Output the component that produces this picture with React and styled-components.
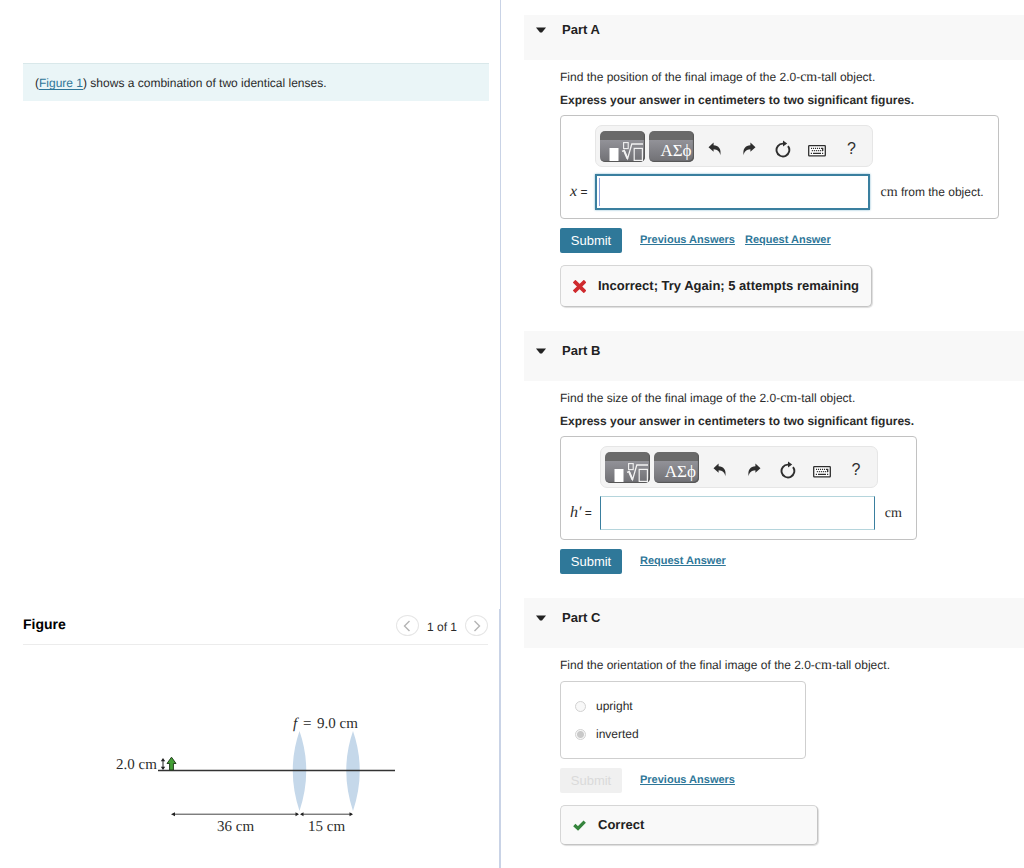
import { useId } from "react"
import styled, { createGlobalStyle } from "styled-components"

const GlobalStyle = createGlobalStyle`
*{
box-sizing: border-box;
}
body{
margin: 0;
background: #fff;
color: #2b2b2b;
font-family: "Liberation Sans", Arial, sans-serif;
font-size: 12px;
line-height: 16px;
text-rendering: geometricPrecision;
}
button, input{
font-family: inherit;
}
`;

function UndoIcon(){
    return (
        <svg width="14" height="14" viewBox="0 0 14 14" aria-hidden="true">
            <path d="M0.5 5.2 5.6 0.6V3.2C10.4 3.4 13.6 6.8 12.3 13.2 11.8 9.6 9.6 7.4 5.6 7.3V9.8Z" fill="#2e2e2e" />
        </svg>
    )
}

function RedoIcon(){
    return (
        <svg width="14" height="14" viewBox="0 0 14 14" aria-hidden="true">
            <path d="M13.5 5.2 8.4 0.6V3.2C3.6 3.4 0.4 6.8 1.7 13.2 2.2 9.6 4.4 7.4 8.4 7.3V9.8Z" fill="#2e2e2e" />
        </svg>
    )
}

function ResetIcon(){
    return (
        <svg width="16" height="18" viewBox="0 0 16 18" aria-hidden="true">
            <path d="M9 3.6H7.8A6.4 6.4 0 1 0 13 6.100" fill="none" stroke="#2e2e2e" strokeWidth="1.900" />
            <path d="M8 0.600 12.200 3.600 8 6.600Z" fill="#2e2e2e" />
        </svg>
    )
}

function KeyboardIcon(){
    return (
        <svg width="18" height="15" viewBox="0 0 18 15" aria-hidden="true">
            <rect x="0.7" y="3.7" width="16.6" height="10.2" rx="0.6" fill="#fff" stroke="#2e2e2e" strokeWidth="1.3" />
            <path d="M3 6.4H15M3.8 8.7H15" stroke="#2e2e2e" strokeWidth="1.3" strokeDasharray="1.1 0.9" />
            <path d="M2.8 11.4H4M5 11.4H13M14 11.4H15.2M14.7 5.8V9" stroke="#2e2e2e" strokeWidth="1.3" />
        </svg>
    )
}

function TemplateIcon(){
    return (
        <svg width="45" height="31" viewBox="0 0 45 31" aria-hidden="true">
            <rect x="9.5" y="17" width="9" height="13" fill="#fff" />
            <rect x="23.6" y="11.6" width="4.6" height="6" fill="none" stroke="#f2f2f2" strokeWidth="1.1" />
            <path d="M22 20.4 24.2 19.4 27.6 27.6 31.8 13H43" fill="none" stroke="#f2f2f2" strokeWidth="1.3" />
            <path d="M24 19.6 27.4 27.6" stroke="#f2f2f2" strokeWidth="1.9" />
            <rect x="34.2" y="17.4" width="8.2" height="12" fill="none" stroke="#f2f2f2" strokeWidth="1.2" />
        </svg>
    )
}

function CrossIcon(){
    return (
        <svg width="13" height="13" viewBox="0 0 13 13" aria-hidden="true">
            <path d="M2.400 2.400 10.800 10.600M10.800 2.400 2.400 10.600" stroke="#cf2a2e" strokeWidth="3.700" strokeLinecap="square" />
        </svg>
    )
}

function CheckIcon(){
    return (
        <svg width="13" height="13" viewBox="0 0 13 13" aria-hidden="true">
            <path d="M1.3 6 5 9.4 11.7 2.6" fill="none" stroke="#35843c" strokeWidth="3.3" />
        </svg>
    )
}

function Lenses(){
    return (
        <Diagram viewBox="0 0 290 130" role="img" aria-label="Object and two lenses">
            <path d="M188.5 22Q202 61 188.5 102Q175 61 188.5 22ZM242 22Q255.5 61 242 102Q228.5 61 242 22Z" fill="#c5d8ea" />
            <path d="M47 61.5H284" stroke="#333" strokeWidth="1.5" />
            <path d="M58.6 61V54.5H56L60.5 48.2 65 54.5H62.4V61Z" fill="#43a035" stroke="#26401f" strokeWidth="1" />
            <path d="M52 51.5V58.5" stroke="#222" strokeWidth="1" />
            <path d="M52 49 54.2 52.2H49.8ZM52 61 54.2 57.8H49.8Z" fill="#222" />
            <path d="M62 105.2H187M190 105.2H241" stroke="#444" strokeWidth="1" />
            <path d="M60 105.2 64 103.2V107.2ZM188 105.2 184.5 103.2V107.2ZM189 105.2 192.5 103.2V107.2ZM242 105.2 238.5 103.2V107.2Z" fill="#222" />
            <text x="5" y="60">2.0 cm</text>
            <text x="182" y="19"><tspan fontStyle="italic">f</tspan><tspan x="192">=</tspan><tspan x="206">9.0 cm</tspan></text>
            <text x="106" y="122">36 cm</text>
            <text x="197" y="122">15 cm</text>
        </Diagram>
    )
}

function AnswerField({ symbol, name, unit, suffix, active }){
    const id = useId()
    return (
        <AnswerBox>
            <Toolbar>
                <MathButton type="button" aria-label="Templates"><TemplateIcon /></MathButton>
                <MathButton type="button" aria-label="Symbols"><Greek>ΑΣϕ</Greek></MathButton>
                <Tools>
                    <ToolButton type="button" aria-label="Undo"><UndoIcon /></ToolButton>
                    <ToolButton type="button" aria-label="Redo"><RedoIcon /></ToolButton>
                    <ToolButton type="button" aria-label="Reset"><ResetIcon /></ToolButton>
                    <ToolButton type="button" aria-label="Keyboard shortcuts"><KeyboardIcon /></ToolButton>
                    <ToolButton type="button" aria-label="Help">?</ToolButton>
                </Tools>
            </Toolbar>
            <Symbol htmlFor={id}><Variable>{symbol}</Variable> =</Symbol>
            <Field>
                <AnswerInput id={id} name={name} type="text" autoComplete="off" $active={active} />
                {active && <Cursor />}
            </Field>
            <Unit><Cm>{unit}</Cm>{suffix}</Unit>
        </AnswerBox>
    )
}

function Part({ title, compact, children }){
    return (
        <section>
            <PartHeader $compact={compact}>
                <Toggle type="button" aria-expanded="true">
                    <svg width="10" height="6" viewBox="0 0 10 6" aria-hidden="true">
                        <path d="M0 0.5H10L6 5.5H4Z" fill="#222" />
                    </svg>
                    {title}
                </Toggle>
            </PartHeader>
            <PartBody>{children}</PartBody>
        </section>
    )
}

function App(){
    return (
        <>
            <GlobalStyle />
            <Page>
                <Left>
                    <Intro>
                        (<a href="#figure">Figure 1</a>) shows a combination of two identical lenses.
                    </Intro>
                    <FigurePanel id="figure">
                        <FigureHeader>
                            <FigureTitle>Figure</FigureTitle>
                            <Pager>
                                <PageButton type="button" aria-label="Previous figure">
                                    <svg width="8" height="12" viewBox="0 0 8 12" aria-hidden="true">
                                        <path d="M6.5 1 1.5 6 6.5 11" fill="none" stroke="#b4b4b4" strokeWidth="1.4" />
                                    </svg>
                                </PageButton>
                                <PageCount>1 of 1</PageCount>
                                <PageButton type="button" aria-label="Next figure">
                                    <svg width="8" height="12" viewBox="0 0 8 12" aria-hidden="true">
                                        <path d="M1.5 1 6.5 6 1.5 11" fill="none" stroke="#b4b4b4" strokeWidth="1.4" />
                                    </svg>
                                </PageButton>
                            </Pager>
                        </FigureHeader>
                        <Lenses />
                    </FigurePanel>
                </Left>
                <Right>
                    <Part title="Part A" compact>
                        <Prompt>Find the position of the final image of the 2.0-<Cm>cm</Cm>-tall object.</Prompt>
                        <Instruction>Express your answer in centimeters to two significant figures.</Instruction>
                        <AnswerField symbol="x" name="position" unit="cm" suffix=" from the object." active />
                        <Actions>
                            <Submit type="button">Submit</Submit>
                            <ActionLink href="#previous">Previous Answers</ActionLink>
                            <ActionLink href="#request">Request Answer</ActionLink>
                        </Actions>
                        <Feedback><CrossIcon />Incorrect; Try Again; 5 attempts remaining</Feedback>
                    </Part>
                    <Part title="Part B">
                        <Prompt>Find the size of the final image of the 2.0-<Cm>cm</Cm>-tall object.</Prompt>
                        <Instruction>Express your answer in centimeters to two significant figures.</Instruction>
                        <AnswerField symbol="h′" name="size" unit="cm" />
                        <Actions>
                            <Submit type="button">Submit</Submit>
                            <ActionLink href="#request">Request Answer</ActionLink>
                        </Actions>
                    </Part>
                    <Part title="Part C">
                        <Prompt>Find the orientation of the final image of the 2.0-<Cm>cm</Cm>-tall object.</Prompt>
                        <Options>
                            <Option><Radio type="radio" name="orientation" disabled />upright</Option>
                            <Option><Radio type="radio" name="orientation" defaultChecked disabled />inverted</Option>
                        </Options>
                        <Actions>
                            <Submit type="button" disabled>Submit</Submit>
                            <ActionLink href="#previous">Previous Answers</ActionLink>
                        </Actions>
                        <Feedback $wide><CheckIcon />Correct</Feedback>
                    </Part>
                </Right>
            </Page>
        </>
    )
}

const Page= styled.main`
display: grid;
grid-template-columns: minmax(0, 501fr) minmax(0, 523fr);
min-height: 100vh;
`;

const Left=styled.div`
display: flex;
flex-direction: column;
justify-content: space-between;
border-right: 1px solid #c9d3e6;
`;

const Right=styled.div`
padding: 15px 0 22px 23px;
`;

const Intro=styled.p`
margin: 63px 11px 0 23px;
padding: 11px 12px 10px;
background: #eaf5f7;
border-top: 1px solid #d9e8ea;
a{
color: #2f7799;
text-underline-offset: 2px;
}
`;

const FigurePanel=styled.section`
padding: 6px 11px 29px 23px;
border-right: 1px solid #c9d3e6;
`;

const FigureHeader=styled.div`
display: flex;
justify-content: space-between;
align-items: flex-start;
height: 30px;
border-bottom: 1px solid #ececec;
`;

const FigureTitle=styled.h2`
margin: 0;
color: #000;
font-size: 14px;
line-height: 18px;
`;

const Pager=styled.div`
display: flex;
gap: 8px;
`;

const PageButton=styled.button`
display: flex;
align-items: center;
justify-content: center;
width: 23px;
height: 21px;
padding: 0;
background: #fff;
border: 1px solid #e6e6e6;
border-radius: 50%;
`;

const PageCount=styled.span`
padding-top: 4px;
`;

const Diagram=styled.svg`
display: block;
width: 100%;
max-width: 290px;
margin: 64px auto 0;
text{
font-family: "Liberation Serif", "Times New Roman", serif;
font-size: 15px;
fill: #2b2b2b;
}
`;

const PartHeader=styled.h2`
height: ${props => props.$compact ? "45px" : "50px"};
margin: 0;
padding: ${props => props.$compact ? "6px" : "11px"} 12px 0;
background: #f8f8f8;
`;

const Toggle=styled.button`
display: flex;
align-items: center;
gap: 16px;
padding: 0;
background: none;
border: none;
color: #222;
font-size: 13px;
font-weight: bold;
line-height: 18px;
`;

const PartBody=styled.div`
padding: 9px 12px 24px 36px;
section:last-child > &{
padding-bottom: 0;
}
`;

const Prompt=styled.p`
margin: 0;
`;

const Instruction=styled.p`
margin: 7px 0 0;
font-weight: bold;
`;

const Cm=styled.span`
font-family: "Liberation Serif", "Times New Roman", serif;
font-size: 14px;
line-height: 14px;
`;

const AnswerBox=styled.div`
display: grid;
grid-template-columns: auto auto auto;
grid-template-rows: 42px 36px;
row-gap: 7px;
align-items: center;
width: fit-content;
margin-top: 7px;
padding: 9px 14px 8px 9px;
border: 1px solid #c2c2c2;
border-radius: 4px;
`;

const Toolbar=styled.div`
grid-column: 2 / span 2;
display: flex;
align-items: flex-start;
gap: 4px;
width: 278px;
height: 42px;
padding: 5px 4px 0;
background: #f4f4f4;
border: 1px solid #e6e6e6;
border-radius: 7px;
`;

const MathButton=styled.button`
flex: none;
width: 45px;
height: 31px;
padding: 0;
background: linear-gradient(#6a6a6a 9px, #929298 9px, #707074 31px);
border: none;
border-radius: 5px;
box-shadow: inset -1px -1px 1px #555;
overflow: hidden;
svg{
display: block;
}
`;

const Greek=styled.span`
display: block;
padding: 9px 0 0 8px;
color: #fff;
font-family: "Liberation Serif", "Times New Roman", serif;
font-size: 17px;
line-height: 20px;
`;

const Tools=styled.div`
display: flex;
`;

const ToolButton=styled.button`
display: flex;
align-items: center;
justify-content: center;
flex: none;
width: 34px;
height: 36px;
padding: 0;
background: none;
border: none;
color: #2e2e2e;
font-size: 16px;
`;

const Symbol=styled.label`
padding-right: 8px;
`;

const Variable=styled.i`
font-family: "Liberation Serif", "Times New Roman", serif;
font-size: 16px;
line-height: 16px;
`;

const Field=styled.div`
position: relative;
`;

const AnswerInput=styled.input`
display: block;
width: 275px;
height: ${props => props.$active ? "36px" : "34px"};
padding: 0 8px;
border: ${props => props.$active ? "2px" : "1px"} solid #3a7f9f;
border-top-color: ${props => props.$active ? "#3a7f9f" : "#b5d5dc"};
border-bottom-color: ${props => props.$active ? "#3a7f9f" : "#b5d5dc"};
box-shadow: ${props => props.$active ? "0 0 2px #7fb6cf" : "none"};
font-size: 14px;
outline: none;
`;

const Cursor=styled.span`
position: absolute;
top: 4px;
left: 4px;
width: 1px;
height: 28px;
background: #8fa3e0;
`;

const Unit=styled.span`
padding-left: 10px;
`;

const Actions=styled.div`
display: flex;
align-items: center;
margin-top: 9px;
`;

const Submit=styled.button`
width: 62px;
height: 25px;
margin-right: 18px;
padding: 0;
background: #2f7899;
border: none;
border-radius: 2px;
color: #fff;
font-size: 13px;
&:disabled{
background: #f0f0f0;
color: #dadada;
}
`;

const ActionLink=styled.a`
margin-right: 10px;
padding-bottom: 2px;
color: #2f7799;
font-size: 11px;
font-weight: bold;
`;

const Feedback=styled.div`
display: flex;
align-items: center;
gap: 12px;
width: ${props => props.$wide ? "258px" : "fit-content"};
height: ${props => props.$wide ? "40px" : "42px"};
margin-top: 12px;
padding: 0 12px;
background: #f9f9f9;
border: 1px solid #d6d6d6;
border-right-color: #c4c4c4;
border-bottom-color: #c4c4c4;
border-radius: 5px;
box-shadow: 1px 1px 1px #ddd;
color: #222;
font-size: 13px;
font-weight: bold;
`;

const Options=styled.div`
display: flex;
flex-direction: column;
gap: 12px;
width: 246px;
height: 78px;
margin-top: 8px;
padding: 16px 14px;
border: 1px solid #cfcfcf;
border-radius: 4px;
`;

const Option=styled.label`
display: flex;
align-items: center;
gap: 10px;
`;

const Radio=styled.input`
appearance: none;
width: 11px;
height: 11px;
margin: 0;
background: #f8f8f8;
border: 1px solid #d2d2d2;
border-radius: 50%;
&:checked{
background: radial-gradient(circle, #c9c9c9 3px, #f8f8f8 4px);
}
`;

export default App
